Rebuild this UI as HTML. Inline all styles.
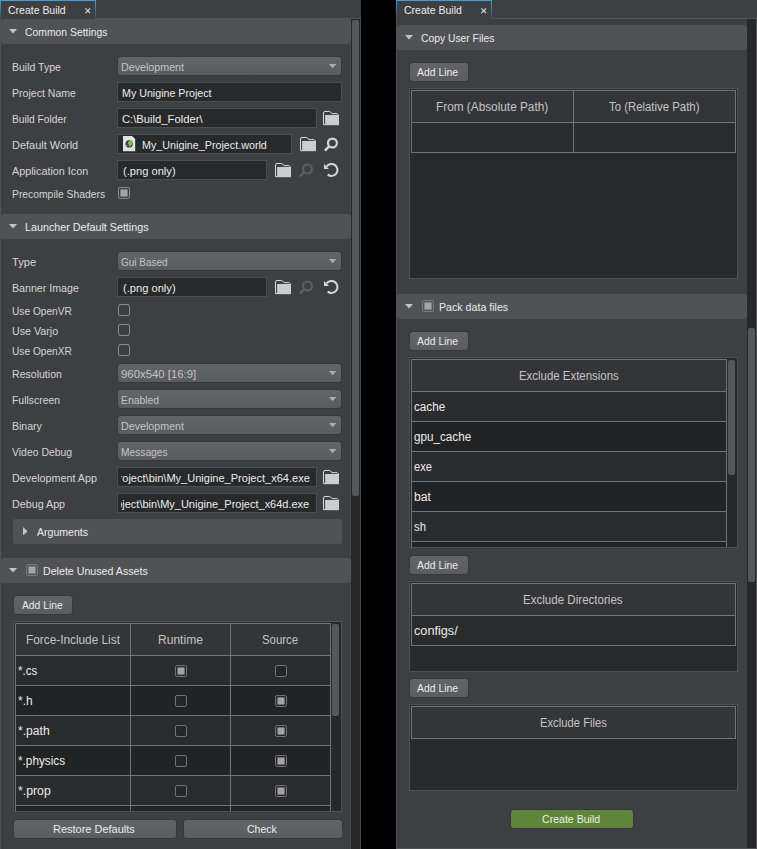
<!DOCTYPE html>
<html><head><meta charset="utf-8"><title>Create Build</title>
<style>
html,body{margin:0;padding:0}
body{width:757px;height:849px;position:relative;overflow:hidden;background:#000;font-family:"Liberation Sans",sans-serif}
body div,body svg,body span{position:absolute;display:block}
.t{white-space:nowrap;line-height:normal;transform-origin:0 50%}
.clip{left:119px;top:467px;width:196px;height:46px;overflow:hidden;position:absolute}
</style></head>
<body>
<div style="left:0;top:0;width:361px;height:849px;background:#3e3f42"></div>
<div style="left:0px;top:0px;width:1px;height:849px;background:#505256"></div>
<div style="left:0px;top:0px;width:96px;height:1px;background:#3ba1dd"></div>
<div style="left:0px;top:0px;width:1px;height:19px;background:linear-gradient(#3ba1dd,#3ba1dd 8%,#3d6e90 60%,#414b53 100%)"></div>
<div style="left:95px;top:0px;width:1px;height:19px;background:linear-gradient(#3ba1dd,#3ba1dd 8%,#3d6e90 60%,#414b53 100%)"></div>
<div style="left:95px;top:18px;width:266px;height:1px;background:#505256"></div>
<svg style="left:84.7px;top:7.7px" width="6" height="6" viewBox="0 0 6 6"><path d="M0.4 0.4L5.1 5.1M5.1 0.4L0.4 5.1" stroke="#dedede" stroke-width="1.1"/></svg>
<span class="t" id="t0" style="left:8.40px;top:3.77px;font-size:11px;color:#ececec;transform:scaleX(0.953)">Create Build</span>
<div style="left:350px;top:19px;width:1px;height:830px;background:#46474a"></div>
<div style="left:351px;top:19px;width:9px;height:830px;background:#282828"></div>
<div style="left:360px;top:19px;width:1px;height:830px;background:#4a4b4e"></div>
<div style="left:352px;top:19.5px;width:7px;height:476.5px;background:#55575a;border-radius:2px"></div>
<div style="left:1px;top:19px;width:350px;height:25px;background:#505256;border-radius:3px"></div>
<svg style="left:8.7px;top:29px" width="8" height="4.5" viewBox="0 0 8 4.5"><path d="M0 0H8L4.0 4.5Z" fill="#c2c2ca"/></svg>
<span class="t" id="t1" style="left:24.90px;top:25.77px;font-size:11px;color:#ececec;transform:scaleX(0.944)">Common Settings</span>
<span class="t" id="t2" style="left:12.20px;top:60.77px;font-size:11px;color:#d6d6d6;transform:scaleX(0.956)">Build Type</span>
<div style="left:118px;top:57px;width:223px;height:18px;background:linear-gradient(#626467,#5a5c5f);border-radius:3px;box-shadow:0 0 0 1px #37383a"></div>
<svg style="left:328.6px;top:64.2px" width="7.2" height="4.2" viewBox="0 0 7.2 4.2"><path d="M0 0H7.2L3.6 4.2Z" fill="#adadaf"/></svg>
<span class="t" id="t3" style="left:121.20px;top:60.77px;font-size:11px;color:#c4c4c4;transform:scaleX(0.972)">Development</span>
<span class="t" id="t4" style="left:12.20px;top:86.77px;font-size:11px;color:#d6d6d6;transform:scaleX(0.959)">Project Name</span>
<div style="left:117px;top:82px;width:225px;height:20px;background:#28292b;border:1px solid #4d4e51;box-sizing:border-box"></div>
<span class="t" id="t5" style="left:122.20px;top:86.77px;font-size:11px;color:#ececec;transform:scaleX(0.970)">My Unigine Project</span>
<span class="t" id="t6" style="left:12.20px;top:112.77px;font-size:11px;color:#d6d6d6;transform:scaleX(0.930)">Build Folder</span>
<div style="left:117px;top:108px;width:200px;height:20px;background:#28292b;border:1px solid #4d4e51;box-sizing:border-box"></div>
<span class="t" id="t7" style="left:122.20px;top:112.77px;font-size:11px;color:#ececec;transform:scaleX(1.022)">C:\Build_Folder\</span>
<svg style="left:323px;top:111px" width="17" height="15" viewBox="0 0 17 15"><path d="M0.5 13.6V2Q0.5 0.5 2 0.5H6.6Q7.2 0.5 7.6 1L8.8 2.6H14.1L15.5 4V13.6Z" fill="none" stroke="#d8d8d8" stroke-width="1"/><path d="M2.1 4H16V14.1H2.1Z" fill="#cdcdcd"/></svg>
<span class="t" id="t8" style="left:12.20px;top:138.77px;font-size:11px;color:#d6d6d6;transform:scaleX(0.996)">Default World</span>
<div style="left:117px;top:134px;width:175px;height:20px;background:#28292b;border:1px solid #4d4e51;box-sizing:border-box"></div>
<svg style="left:122.9px;top:136px" width="13" height="16" viewBox="0 0 13 16"><path d="M0 0H8.7L12.2 3.3V15.3H0Z" fill="#e1e1e1"/><path d="M8.7 0L12.2 3.3H8.7Z" fill="#fbfbfb"/><circle cx="6.18" cy="7.9" r="3.65" fill="#3e3e46"/><path d="M6.3 5L8.2 4.9L9.4 6.4L9.3 8.4L8.3 9.1L7.7 10.6L6.6 10.8L5.9 8.9L5 7.8L5.2 6.1Z" fill="#78c44c"/><circle cx="3.8" cy="9.8" r="0.7" fill="#78c44c"/></svg>
<span class="t" id="t9" style="left:142.10px;top:138.77px;font-size:11px;color:#ececec;transform:scaleX(0.977)">My_Unigine_Project.world</span>
<svg style="left:300px;top:137px" width="17" height="15" viewBox="0 0 17 15"><path d="M0.5 13.6V2Q0.5 0.5 2 0.5H6.6Q7.2 0.5 7.6 1L8.8 2.6H14.1L15.5 4V13.6Z" fill="none" stroke="#d8d8d8" stroke-width="1"/><path d="M2.1 4H16V14.1H2.1Z" fill="#cdcdcd"/></svg>
<svg style="left:323px;top:136.5px" width="16" height="16" viewBox="0 0 16 16"><circle cx="9.43" cy="5.98" r="4.45" fill="none" stroke="#d6d6d6" stroke-width="2.2"/><path d="M6.4 9L1.9 13.6" stroke="#d6d6d6" stroke-width="2.5" stroke-linecap="butt"/></svg>
<span class="t" id="t10" style="left:12.20px;top:164.77px;font-size:11px;color:#d6d6d6;transform:scaleX(0.981)">Application Icon</span>
<div style="left:117px;top:160px;width:150px;height:20px;background:#28292b;border:1px solid #4d4e51;box-sizing:border-box"></div>
<span class="t" id="t11" style="left:122.60px;top:164.77px;font-size:11px;color:#ececec;transform:scaleX(1.012)">(.png only)</span>
<svg style="left:275px;top:163px" width="17" height="15" viewBox="0 0 17 15"><path d="M0.5 13.6V2Q0.5 0.5 2 0.5H6.6Q7.2 0.5 7.6 1L8.8 2.6H14.1L15.5 4V13.6Z" fill="none" stroke="#d8d8d8" stroke-width="1"/><path d="M2.1 4H16V14.1H2.1Z" fill="#cdcdcd"/></svg>
<svg style="left:298.3px;top:162.5px" width="16" height="16" viewBox="0 0 16 16"><circle cx="9.43" cy="5.98" r="4.45" fill="none" stroke="#5c5d60" stroke-width="2.2"/><path d="M6.4 9L1.9 13.6" stroke="#5c5d60" stroke-width="2.5" stroke-linecap="butt"/></svg>
<svg style="left:323px;top:162px" width="17" height="17" viewBox="0 0 17 17"><path d="M3.6 4.4A6 6 0 1 1 4.71 12.6" fill="none" stroke="#d6d6d6" stroke-width="2"/><path d="M1 2V7H6Z" fill="#d6d6d6"/></svg>
<span class="t" id="t12" style="left:12.20px;top:187.77px;font-size:11px;color:#d6d6d6;transform:scaleX(0.940)">Precompile Shaders</span>
<svg style="left:118px;top:187px" width="12" height="12" viewBox="0 0 12 12"><rect x="0.5" y="0.5" width="11" height="11" rx="1.6" fill="none" stroke="#8a8b8d"/><rect x="2.4" y="2.4" width="7.2" height="7.2" fill="#a4a2a2"/></svg>
<div style="left:1px;top:214px;width:350px;height:25px;background:#505256;border-radius:3px"></div>
<svg style="left:8.7px;top:224px" width="8" height="4.5" viewBox="0 0 8 4.5"><path d="M0 0H8L4.0 4.5Z" fill="#c2c2ca"/></svg>
<span class="t" id="t13" style="left:24.90px;top:220.77px;font-size:11px;color:#ececec;transform:scaleX(0.976)">Launcher Default Settings</span>
<span class="t" id="t14" style="left:12.20px;top:255.77px;font-size:11px;color:#d6d6d6;transform:scaleX(1.014)">Type</span>
<div style="left:118px;top:252px;width:223px;height:18px;background:linear-gradient(#626467,#5a5c5f);border-radius:3px;box-shadow:0 0 0 1px #37383a"></div>
<svg style="left:328.6px;top:259.2px" width="7.2" height="4.2" viewBox="0 0 7.2 4.2"><path d="M0 0H7.2L3.6 4.2Z" fill="#adadaf"/></svg>
<span class="t" id="t15" style="left:121.20px;top:255.77px;font-size:11px;color:#c4c4c4;transform:scaleX(0.907)">Gui Based</span>
<span class="t" id="t16" style="left:12.20px;top:281.77px;font-size:11px;color:#d6d6d6;transform:scaleX(0.968)">Banner Image</span>
<div style="left:117px;top:277px;width:150px;height:20px;background:#28292b;border:1px solid #4d4e51;box-sizing:border-box"></div>
<span class="t" id="t17" style="left:122.60px;top:281.77px;font-size:11px;color:#ececec;transform:scaleX(1.012)">(.png only)</span>
<svg style="left:275px;top:280px" width="17" height="15" viewBox="0 0 17 15"><path d="M0.5 13.6V2Q0.5 0.5 2 0.5H6.6Q7.2 0.5 7.6 1L8.8 2.6H14.1L15.5 4V13.6Z" fill="none" stroke="#d8d8d8" stroke-width="1"/><path d="M2.1 4H16V14.1H2.1Z" fill="#cdcdcd"/></svg>
<svg style="left:298.3px;top:279.5px" width="16" height="16" viewBox="0 0 16 16"><circle cx="9.43" cy="5.98" r="4.45" fill="none" stroke="#5c5d60" stroke-width="2.2"/><path d="M6.4 9L1.9 13.6" stroke="#5c5d60" stroke-width="2.5" stroke-linecap="butt"/></svg>
<svg style="left:323px;top:279px" width="17" height="17" viewBox="0 0 17 17"><path d="M3.6 4.4A6 6 0 1 1 4.71 12.6" fill="none" stroke="#d6d6d6" stroke-width="2"/><path d="M1 2V7H6Z" fill="#d6d6d6"/></svg>
<span class="t" id="t18" style="left:12.20px;top:304.77px;font-size:11px;color:#d6d6d6;transform:scaleX(0.924)">Use OpenVR</span>
<svg style="left:118px;top:304px" width="12" height="12" viewBox="0 0 12 12"><rect x="0.5" y="0.5" width="11" height="11" rx="1.6" fill="none" stroke="#8a8b8d"/></svg>
<span class="t" id="t19" style="left:12.20px;top:324.77px;font-size:11px;color:#d6d6d6;transform:scaleX(0.971)">Use Varjo</span>
<svg style="left:118px;top:324px" width="12" height="12" viewBox="0 0 12 12"><rect x="0.5" y="0.5" width="11" height="11" rx="1.6" fill="none" stroke="#8a8b8d"/></svg>
<span class="t" id="t20" style="left:12.20px;top:344.77px;font-size:11px;color:#d6d6d6;transform:scaleX(0.924)">Use OpenXR</span>
<svg style="left:118px;top:344px" width="12" height="12" viewBox="0 0 12 12"><rect x="0.5" y="0.5" width="11" height="11" rx="1.6" fill="none" stroke="#8a8b8d"/></svg>
<span class="t" id="t21" style="left:12.20px;top:367.77px;font-size:11px;color:#d6d6d6;transform:scaleX(0.960)">Resolution</span>
<div style="left:118px;top:364px;width:223px;height:18px;background:linear-gradient(#626467,#5a5c5f);border-radius:3px;box-shadow:0 0 0 1px #37383a"></div>
<svg style="left:328.6px;top:371.2px" width="7.2" height="4.2" viewBox="0 0 7.2 4.2"><path d="M0 0H7.2L3.6 4.2Z" fill="#adadaf"/></svg>
<span class="t" id="t22" style="left:121.20px;top:367.77px;font-size:11px;color:#c4c4c4;transform:scaleX(1.034)">960x540 [16:9]</span>
<span class="t" id="t23" style="left:12.20px;top:393.77px;font-size:11px;color:#d6d6d6;transform:scaleX(0.948)">Fullscreen</span>
<div style="left:118px;top:390px;width:223px;height:18px;background:linear-gradient(#626467,#5a5c5f);border-radius:3px;box-shadow:0 0 0 1px #37383a"></div>
<svg style="left:328.6px;top:397.2px" width="7.2" height="4.2" viewBox="0 0 7.2 4.2"><path d="M0 0H7.2L3.6 4.2Z" fill="#adadaf"/></svg>
<span class="t" id="t24" style="left:121.20px;top:393.77px;font-size:11px;color:#c4c4c4;transform:scaleX(0.944)">Enabled</span>
<span class="t" id="t25" style="left:12.20px;top:419.77px;font-size:11px;color:#d6d6d6;transform:scaleX(0.956)">Binary</span>
<div style="left:118px;top:416px;width:223px;height:18px;background:linear-gradient(#626467,#5a5c5f);border-radius:3px;box-shadow:0 0 0 1px #37383a"></div>
<svg style="left:328.6px;top:423.2px" width="7.2" height="4.2" viewBox="0 0 7.2 4.2"><path d="M0 0H7.2L3.6 4.2Z" fill="#adadaf"/></svg>
<span class="t" id="t26" style="left:121.20px;top:419.77px;font-size:11px;color:#c4c4c4;transform:scaleX(0.972)">Development</span>
<span class="t" id="t27" style="left:12.20px;top:445.77px;font-size:11px;color:#d6d6d6;transform:scaleX(0.949)">Video Debug</span>
<div style="left:118px;top:442px;width:223px;height:18px;background:linear-gradient(#626467,#5a5c5f);border-radius:3px;box-shadow:0 0 0 1px #37383a"></div>
<svg style="left:328.6px;top:449.2px" width="7.2" height="4.2" viewBox="0 0 7.2 4.2"><path d="M0 0H7.2L3.6 4.2Z" fill="#adadaf"/></svg>
<span class="t" id="t28" style="left:121.20px;top:445.77px;font-size:11px;color:#c4c4c4;transform:scaleX(0.929)">Messages</span>
<span class="t" id="t29" style="left:12.20px;top:471.77px;font-size:11px;color:#d6d6d6;transform:scaleX(0.979)">Development App</span>
<div style="left:117px;top:467px;width:200px;height:20px;background:#28292b;border:1px solid #4d4e51;box-sizing:border-box"></div>
<svg style="left:323px;top:470px" width="17" height="15" viewBox="0 0 17 15"><path d="M0.5 13.6V2Q0.5 0.5 2 0.5H6.6Q7.2 0.5 7.6 1L8.8 2.6H14.1L15.5 4V13.6Z" fill="none" stroke="#d8d8d8" stroke-width="1"/><path d="M2.1 4H16V14.1H2.1Z" fill="#cdcdcd"/></svg>
<span class="t" id="t30" style="left:12.20px;top:497.77px;font-size:11px;color:#d6d6d6;transform:scaleX(0.975)">Debug App</span>
<div style="left:117px;top:493px;width:200px;height:20px;background:#28292b;border:1px solid #4d4e51;box-sizing:border-box"></div>
<svg style="left:323px;top:496px" width="17" height="15" viewBox="0 0 17 15"><path d="M0.5 13.6V2Q0.5 0.5 2 0.5H6.6Q7.2 0.5 7.6 1L8.8 2.6H14.1L15.5 4V13.6Z" fill="none" stroke="#d8d8d8" stroke-width="1"/><path d="M2.1 4H16V14.1H2.1Z" fill="#cdcdcd"/></svg>
<div style="left:121px;top:468px;width:195px;height:18px;overflow:hidden"><span class="t" id="t31" style="right:6.70px;top:3.77px;font-size:11px;color:#ececec;transform-origin:100% 50%;transform:scaleX(1.002)">roject\bin\My_Unigine_Project_x64.exe</span></div>
<div style="left:121px;top:494px;width:195px;height:18px;overflow:hidden"><span class="t" id="t32" style="right:6.70px;top:3.77px;font-size:11px;color:#ececec;transform-origin:100% 50%;transform:scaleX(0.999)">oject\bin\My_Unigine_Project_x64d.exe</span></div>
<div style="left:13px;top:519px;width:329px;height:25px;background:#505256;border-radius:3px"></div>
<svg style="left:22.7px;top:526.7px" width="4.7" height="8.6" viewBox="0 0 4.7 8.6"><path d="M0 0V8.6L4.7 4.3Z" fill="#c2c2ca"/></svg>
<span class="t" id="t33" style="left:37.10px;top:525.77px;font-size:11px;color:#ececec;transform:scaleX(0.960)">Arguments</span>
<div style="left:1px;top:558px;width:350px;height:25px;background:#505256;border-radius:3px"></div>
<svg style="left:8.7px;top:568px" width="8" height="4.5" viewBox="0 0 8 4.5"><path d="M0 0H8L4.0 4.5Z" fill="#c2c2ca"/></svg>
<svg style="left:26px;top:564px" width="12" height="12" viewBox="0 0 12 12"><rect x="0.5" y="0.5" width="11" height="11" rx="1.6" fill="none" stroke="#7a7b7d"/><rect x="2.4" y="2.4" width="7.2" height="7.2" fill="#a4a2a2"/></svg>
<span class="t" id="t34" style="left:43.40px;top:564.77px;font-size:11px;color:#ececec;transform:scaleX(0.968)">Delete Unused Assets</span>
<div style="left:14px;top:596px;width:58px;height:18px;background:linear-gradient(#626467,#5a5c5f);border-radius:3px;box-shadow:0 0 0 1px #37383a"></div>
<span class="t" id="t35" style="left:21.50px;top:598.77px;font-size:11px;color:#ececec;transform:scaleX(0.935)">Add Line</span>
<div style="left:13px;top:621px;width:329px;height:191px;background:#28292b;border:1px solid #4f5053;box-sizing:border-box"></div>
<div style="left:16px;top:624px;width:314px;height:31px;background:#343538"></div>
<div style="left:16px;top:656px;width:314px;height:29px;background:#2a2b2d"></div>
<div style="left:16px;top:686px;width:314px;height:29px;background:#222325"></div>
<div style="left:16px;top:716px;width:314px;height:29px;background:#2a2b2d"></div>
<div style="left:16px;top:746px;width:314px;height:29px;background:#222325"></div>
<div style="left:16px;top:776px;width:314px;height:29px;background:#2a2b2d"></div>
<div style="left:16px;top:806px;width:314px;height:5px;background:#222325"></div>
<div style="left:15px;top:623px;width:316px;height:1px;background:#737476"></div>
<div style="left:15px;top:623px;width:1px;height:188px;background:#737476"></div>
<div style="left:130px;top:623px;width:1px;height:188px;background:#737476"></div>
<div style="left:230px;top:623px;width:1px;height:188px;background:#737476"></div>
<div style="left:330px;top:623px;width:1px;height:188px;background:#737476"></div>
<div style="left:15px;top:655px;width:316px;height:1px;background:#737476"></div>
<div style="left:15px;top:685px;width:316px;height:1px;background:#737476"></div>
<div style="left:15px;top:715px;width:316px;height:1px;background:#737476"></div>
<div style="left:15px;top:745px;width:316px;height:1px;background:#737476"></div>
<div style="left:15px;top:775px;width:316px;height:1px;background:#737476"></div>
<div style="left:15px;top:805px;width:316px;height:1px;background:#737476"></div>
<div style="left:331px;top:622px;width:10px;height:189px;background:#282828"></div>
<div style="left:332px;top:624px;width:7px;height:92px;background:#55575a;border-radius:2px"></div>
<span class="t" id="t36" style="left:26.20px;top:632.85px;font-size:12px;color:#c4c4c4;transform:scaleX(0.985)">Force-Include List</span>
<span class="t" id="t37" style="left:158.10px;top:632.85px;font-size:12px;color:#c4c4c4;transform:scaleX(1.005)">Runtime</span>
<span class="t" id="t38" style="left:262.00px;top:632.85px;font-size:12px;color:#c4c4c4;transform:scaleX(0.947)">Source</span>
<span class="t" id="t39" style="left:18.10px;top:663.85px;font-size:12px;color:#ececec;transform:scaleX(0.959)">*.cs</span>
<svg style="left:174.6px;top:664.6px" width="12" height="12" viewBox="0 0 12 12"><rect x="0.5" y="0.5" width="11" height="11" rx="1.6" fill="#242527" stroke="#747577"/><rect x="2.4" y="2.4" width="7.2" height="7.2" fill="#a4a2a2"/></svg>
<svg style="left:274.6px;top:664.6px" width="12" height="12" viewBox="0 0 12 12"><rect x="0.5" y="0.5" width="11" height="11" rx="1.6" fill="#242527" stroke="#747577"/></svg>
<span class="t" id="t40" style="left:18.10px;top:693.85px;font-size:12px;color:#ececec;transform:scaleX(0.994)">*.h</span>
<svg style="left:174.6px;top:694.6px" width="12" height="12" viewBox="0 0 12 12"><rect x="0.5" y="0.5" width="11" height="11" rx="1.6" fill="#242527" stroke="#747577"/></svg>
<svg style="left:274.6px;top:694.6px" width="12" height="12" viewBox="0 0 12 12"><rect x="0.5" y="0.5" width="11" height="11" rx="1.6" fill="#242527" stroke="#747577"/><rect x="2.4" y="2.4" width="7.2" height="7.2" fill="#a4a2a2"/></svg>
<span class="t" id="t41" style="left:18.10px;top:723.85px;font-size:12px;color:#ececec;transform:scaleX(1.011)">*.path</span>
<svg style="left:174.6px;top:724.6px" width="12" height="12" viewBox="0 0 12 12"><rect x="0.5" y="0.5" width="11" height="11" rx="1.6" fill="#242527" stroke="#747577"/></svg>
<svg style="left:274.6px;top:724.6px" width="12" height="12" viewBox="0 0 12 12"><rect x="0.5" y="0.5" width="11" height="11" rx="1.6" fill="#242527" stroke="#747577"/><rect x="2.4" y="2.4" width="7.2" height="7.2" fill="#a4a2a2"/></svg>
<span class="t" id="t42" style="left:18.10px;top:753.85px;font-size:12px;color:#ececec;transform:scaleX(0.981)">*.physics</span>
<svg style="left:174.6px;top:754.6px" width="12" height="12" viewBox="0 0 12 12"><rect x="0.5" y="0.5" width="11" height="11" rx="1.6" fill="#242527" stroke="#747577"/></svg>
<svg style="left:274.6px;top:754.6px" width="12" height="12" viewBox="0 0 12 12"><rect x="0.5" y="0.5" width="11" height="11" rx="1.6" fill="#242527" stroke="#747577"/><rect x="2.4" y="2.4" width="7.2" height="7.2" fill="#a4a2a2"/></svg>
<span class="t" id="t43" style="left:18.10px;top:783.85px;font-size:12px;color:#ececec;transform:scaleX(1.021)">*.prop</span>
<svg style="left:174.6px;top:784.6px" width="12" height="12" viewBox="0 0 12 12"><rect x="0.5" y="0.5" width="11" height="11" rx="1.6" fill="#242527" stroke="#747577"/></svg>
<svg style="left:274.6px;top:784.6px" width="12" height="12" viewBox="0 0 12 12"><rect x="0.5" y="0.5" width="11" height="11" rx="1.6" fill="#242527" stroke="#747577"/><rect x="2.4" y="2.4" width="7.2" height="7.2" fill="#a4a2a2"/></svg>
<div style="left:14px;top:820px;width:162px;height:18px;background:linear-gradient(#626467,#5a5c5f);border-radius:3px;box-shadow:0 0 0 1px #37383a"></div>
<span class="t" id="t44" style="left:52.90px;top:822.77px;font-size:11px;color:#ececec;transform:scaleX(0.998)">Restore Defaults</span>
<div style="left:184px;top:820px;width:158px;height:18px;background:linear-gradient(#626467,#5a5c5f);border-radius:3px;box-shadow:0 0 0 1px #37383a"></div>
<span class="t" id="t45" style="left:247.40px;top:822.77px;font-size:11px;color:#ececec;transform:scaleX(0.956)">Check</span>
<div style="left:396px;top:0;width:361px;height:849px;background:#3e3f42"></div>
<div style="left:396px;top:0px;width:1px;height:849px;background:#505256"></div>
<div style="left:396px;top:0px;width:96px;height:1px;background:#3ba1dd"></div>
<div style="left:396px;top:0px;width:1px;height:19px;background:linear-gradient(#3ba1dd,#3ba1dd 8%,#3d6e90 60%,#414b53 100%)"></div>
<div style="left:491px;top:0px;width:1px;height:19px;background:linear-gradient(#3ba1dd,#3ba1dd 8%,#3d6e90 60%,#414b53 100%)"></div>
<div style="left:491px;top:18px;width:266px;height:1px;background:#505256"></div>
<svg style="left:480.7px;top:7.7px" width="6" height="6" viewBox="0 0 6 6"><path d="M0.4 0.4L5.1 5.1M5.1 0.4L0.4 5.1" stroke="#dedede" stroke-width="1.1"/></svg>
<span class="t" id="t46" style="left:404.30px;top:3.77px;font-size:11px;color:#ececec;transform:scaleX(0.955)">Create Build</span>
<div style="left:747px;top:19px;width:9px;height:829px;background:#282828"></div>
<div style="left:756px;top:19px;width:1px;height:830px;background:#505256"></div>
<div style="left:396px;top:848px;width:361px;height:1px;background:#505256"></div>
<div style="left:748px;top:328px;width:7px;height:254px;background:#55575a;border-radius:2px"></div>
<div style="left:397px;top:25px;width:350px;height:25px;background:#505256;border-radius:3px"></div>
<svg style="left:404.7px;top:35px" width="8" height="4.5" viewBox="0 0 8 4.5"><path d="M0 0H8L4.0 4.5Z" fill="#c2c2ca"/></svg>
<span class="t" id="t47" style="left:420.90px;top:31.77px;font-size:11px;color:#ececec;transform:scaleX(0.938)">Copy User Files</span>
<div style="left:410px;top:63px;width:58px;height:18px;background:linear-gradient(#626467,#5a5c5f);border-radius:3px;box-shadow:0 0 0 1px #37383a"></div>
<span class="t" id="t48" style="left:417.20px;top:65.77px;font-size:11px;color:#ececec;transform:scaleX(0.946)">Add Line</span>
<div style="left:409px;top:88px;width:329px;height:191px;background:#28292b;border:1px solid #4f5053;box-sizing:border-box"></div>
<div style="left:412px;top:91px;width:323px;height:31px;background:#343538"></div>
<div style="left:412px;top:123px;width:323px;height:29px;background:#2a2b2d"></div>
<div style="left:411px;top:90px;width:325px;height:1px;background:#737476"></div>
<div style="left:411px;top:90px;width:1px;height:63px;background:#737476"></div>
<div style="left:573px;top:90px;width:1px;height:63px;background:#737476"></div>
<div style="left:735px;top:90px;width:1px;height:63px;background:#737476"></div>
<div style="left:411px;top:122px;width:325px;height:1px;background:#737476"></div>
<div style="left:411px;top:152px;width:325px;height:1px;background:#737476"></div>
<span class="t" id="t49" style="left:436.20px;top:99.85px;font-size:12px;color:#c4c4c4;transform:scaleX(0.984)">From (Absolute Path)</span>
<span class="t" id="t50" style="left:609.30px;top:99.85px;font-size:12px;color:#c4c4c4;transform:scaleX(0.948)">To (Relative Path)</span>
<div style="left:397px;top:294px;width:350px;height:25px;background:#505256;border-radius:3px"></div>
<svg style="left:404.7px;top:304px" width="8" height="4.5" viewBox="0 0 8 4.5"><path d="M0 0H8L4.0 4.5Z" fill="#c2c2ca"/></svg>
<svg style="left:422px;top:300px" width="12" height="12" viewBox="0 0 12 12"><rect x="0.5" y="0.5" width="11" height="11" rx="1.6" fill="none" stroke="#7a7b7d"/><rect x="2.4" y="2.4" width="7.2" height="7.2" fill="#a4a2a2"/></svg>
<span class="t" id="t51" style="left:439.40px;top:300.77px;font-size:11px;color:#ececec;transform:scaleX(0.967)">Pack data files</span>
<div style="left:410px;top:332px;width:58px;height:18px;background:linear-gradient(#626467,#5a5c5f);border-radius:3px;box-shadow:0 0 0 1px #37383a"></div>
<span class="t" id="t52" style="left:417.20px;top:334.77px;font-size:11px;color:#ececec;transform:scaleX(0.946)">Add Line</span>
<div style="left:409px;top:357px;width:329px;height:191px;background:#28292b;border:1px solid #4f5053;box-sizing:border-box"></div>
<div style="left:412px;top:360px;width:314px;height:31px;background:#343538"></div>
<div style="left:412px;top:392px;width:314px;height:29px;background:#2a2b2d"></div>
<div style="left:412px;top:422px;width:314px;height:29px;background:#222325"></div>
<div style="left:412px;top:452px;width:314px;height:29px;background:#2a2b2d"></div>
<div style="left:412px;top:482px;width:314px;height:29px;background:#222325"></div>
<div style="left:412px;top:512px;width:314px;height:29px;background:#2a2b2d"></div>
<div style="left:412px;top:542px;width:314px;height:5px;background:#222325"></div>
<div style="left:411px;top:359px;width:316px;height:1px;background:#737476"></div>
<div style="left:411px;top:359px;width:1px;height:188px;background:#737476"></div>
<div style="left:726px;top:359px;width:1px;height:188px;background:#737476"></div>
<div style="left:411px;top:391px;width:316px;height:1px;background:#737476"></div>
<div style="left:411px;top:421px;width:316px;height:1px;background:#737476"></div>
<div style="left:411px;top:451px;width:316px;height:1px;background:#737476"></div>
<div style="left:411px;top:481px;width:316px;height:1px;background:#737476"></div>
<div style="left:411px;top:511px;width:316px;height:1px;background:#737476"></div>
<div style="left:411px;top:541px;width:316px;height:1px;background:#737476"></div>
<div style="left:727px;top:358px;width:10px;height:189px;background:#282828"></div>
<div style="left:728px;top:360px;width:7px;height:114.5px;background:#55575a;border-radius:2px"></div>
<span class="t" id="t53" style="left:519.20px;top:368.85px;font-size:12px;color:#c4c4c4;transform:scaleX(0.952)">Exclude Extensions</span>
<span class="t" id="t54" style="left:414.00px;top:399.85px;font-size:12px;color:#ececec;transform:scaleX(0.974)">cache</span>
<span class="t" id="t55" style="left:414.00px;top:429.85px;font-size:12px;color:#ececec;transform:scaleX(0.974)">gpu_cache</span>
<span class="t" id="t56" style="left:414.00px;top:459.85px;font-size:12px;color:#ececec;transform:scaleX(0.930)">exe</span>
<span class="t" id="t57" style="left:414.00px;top:489.85px;font-size:12px;color:#ececec;transform:scaleX(1.019)">bat</span>
<span class="t" id="t58" style="left:414.00px;top:519.85px;font-size:12px;color:#ececec;transform:scaleX(0.946)">sh</span>
<div style="left:410px;top:556px;width:58px;height:18px;background:linear-gradient(#626467,#5a5c5f);border-radius:3px;box-shadow:0 0 0 1px #37383a"></div>
<span class="t" id="t59" style="left:417.20px;top:558.77px;font-size:11px;color:#ececec;transform:scaleX(0.946)">Add Line</span>
<div style="left:409px;top:581px;width:329px;height:91px;background:#28292b;border:1px solid #4f5053;box-sizing:border-box"></div>
<div style="left:412px;top:584px;width:323px;height:31px;background:#343538"></div>
<div style="left:412px;top:616px;width:323px;height:29px;background:#2a2b2d"></div>
<div style="left:411px;top:583px;width:325px;height:1px;background:#737476"></div>
<div style="left:411px;top:583px;width:1px;height:63px;background:#737476"></div>
<div style="left:735px;top:583px;width:1px;height:63px;background:#737476"></div>
<div style="left:411px;top:615px;width:325px;height:1px;background:#737476"></div>
<div style="left:411px;top:645px;width:325px;height:1px;background:#737476"></div>
<span class="t" id="t60" style="left:522.90px;top:592.85px;font-size:12px;color:#c4c4c4;transform:scaleX(0.964)">Exclude Directories</span>
<span class="t" id="t61" style="left:414.00px;top:623.85px;font-size:12px;color:#ececec;transform:scaleX(1.057)">configs/</span>
<div style="left:410px;top:679px;width:58px;height:18px;background:linear-gradient(#626467,#5a5c5f);border-radius:3px;box-shadow:0 0 0 1px #37383a"></div>
<span class="t" id="t62" style="left:417.20px;top:681.77px;font-size:11px;color:#ececec;transform:scaleX(0.946)">Add Line</span>
<div style="left:409px;top:704px;width:329px;height:87px;background:#28292b;border:1px solid #4f5053;box-sizing:border-box"></div>
<div style="left:412px;top:707px;width:323px;height:31px;background:#343538"></div>
<div style="left:411px;top:706px;width:325px;height:1px;background:#737476"></div>
<div style="left:411px;top:706px;width:1px;height:33px;background:#737476"></div>
<div style="left:735px;top:706px;width:1px;height:33px;background:#737476"></div>
<div style="left:411px;top:738px;width:325px;height:1px;background:#737476"></div>
<span class="t" id="t63" style="left:539.90px;top:715.85px;font-size:12px;color:#c4c4c4;transform:scaleX(0.937)">Exclude Files</span>
<div style="left:511px;top:810px;width:122px;height:18px;background:#5f853b;border-radius:3px;box-shadow:0 0 0 1px #37383a"></div>
<span class="t" id="t64" style="left:542.10px;top:812.77px;font-size:11px;color:#eef2e6;transform:scaleX(0.960)">Create Build</span>
</body></html>
